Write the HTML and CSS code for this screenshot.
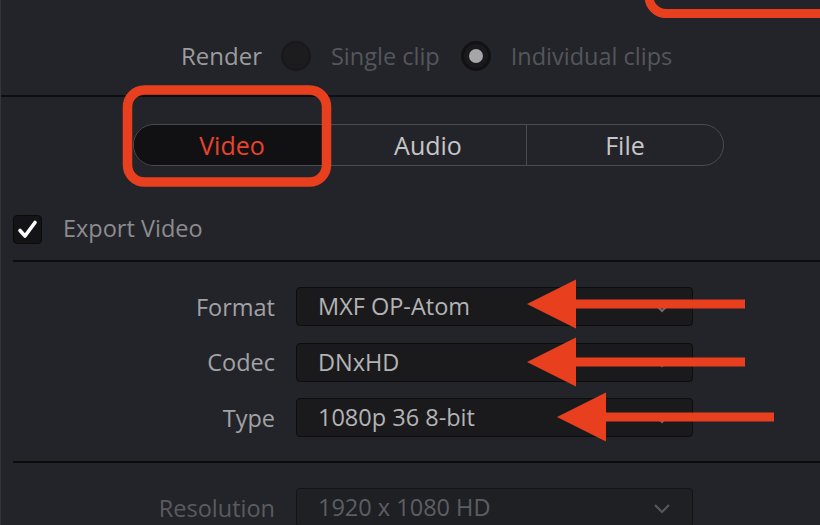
FILE: index.html
```html
<!DOCTYPE html>
<html>
<head>
<meta charset="utf-8">
<link rel="stylesheet" href="styles.css">
</head>
<body>
<div class="page">
  <div class="render-row">
    <span class="render-label">Render</span>
    <span class="radio"></span>
    <span class="radio-text">Single clip</span>
    <span class="radio radio-on"><span class="dot"></span></span>
    <span class="radio-text">Individual clips</span>
  </div>

  <div class="tabs">
    <div class="tab tab-active">Video</div>
    <div class="tab">Audio</div>
    <div class="tab">File</div>
  </div>

  <div class="export-row">
    <span class="checkbox">
      <svg width="29" height="29" viewBox="0 0 29 29"><path d="M7 15.5 L12 21 L22 7.5" fill="none" stroke="#ffffff" stroke-width="3.6" stroke-linecap="round" stroke-linejoin="round"/></svg>
    </span>
    <span class="export-text">Export Video</span>
  </div>

  <div class="sep"></div>

  <div class="form">
    <div class="row">
      <span class="label">Format</span>
      <div class="select"><span class="value">MXF OP-Atom</span><svg class="chev" width="18" height="12" viewBox="0 0 18 12"><path d="M2 2 L9 9 L16 2" fill="none" stroke="#6a6b70" stroke-width="2.2"/></svg></div>
    </div>
    <div class="row">
      <span class="label">Codec</span>
      <div class="select"><span class="value">DNxHD</span><svg class="chev" width="18" height="12" viewBox="0 0 18 12"><path d="M2 2 L9 9 L16 2" fill="none" stroke="#6a6b70" stroke-width="2.2"/></svg></div>
    </div>
    <div class="row">
      <span class="label">Type</span>
      <div class="select"><span class="value">1080p 36 8-bit</span><svg class="chev" width="18" height="12" viewBox="0 0 18 12"><path d="M2 2 L9 9 L16 2" fill="none" stroke="#6a6b70" stroke-width="2.2"/></svg></div>
    </div>
  </div>

  <div class="sep sep2"></div>

  <div class="row dim-row">
    <span class="label dim">Resolution</span>
    <div class="select"><span class="value dim">1920 x 1080 HD</span><svg class="chev" width="18" height="12" viewBox="0 0 18 12"><path d="M2 2 L9 9 L16 2" fill="none" stroke="#55565b" stroke-width="2.2"/></svg></div>
  </div>

  <svg class="overlay" width="820" height="525" viewBox="0 0 820 525">
    <rect x="649" y="-100" width="300" height="113.5" rx="17" fill="none" stroke="#e8401f" stroke-width="9"/>
    <rect x="127.5" y="90" width="199" height="92" rx="17" fill="none" stroke="#e8401f" stroke-width="9.5"/>
    <polygon fill="#e8401f" points="527,304 576,279.5 576,299.5 745,299.5 745,308.5 576,308.5 576,328.5"/>
    <polygon fill="#e8401f" points="527,362 576,337.5 576,357.5 745,357.5 745,366.5 576,366.5 576,386.5"/>
    <polygon fill="#e8401f" points="557,417 606,392.5 606,412.5 774,412.5 774,421.5 606,421.5 606,441.5"/>
  </svg>
</div>
</body>
</html>
```

FILE: styles.css
```css
html, body {
  margin: 0;
  padding: 0;
  background: #232429;
}
body {
  width: 820px;
  height: 525px;
  overflow: hidden;
  font-family: "Open Sans", "Noto Sans", sans-serif;
}
.page {
  position: relative;
  width: 820px;
  height: 525px;
  box-sizing: border-box;
  border-left: 1px solid #34353a;
  overflow: hidden;
}

/* Render row */
.render-row {
  box-sizing: border-box;
  height: 97px;
  padding-top: 41px;
  padding-left: 180px;
  display: flex;
  align-items: flex-start;
  border-bottom: 2px solid #0e0e10;
  font-size: 24px;
  line-height: 30px;
}
.render-label {
  color: #9c9c9e;
  margin-right: 19px;
}
.radio {
  width: 30px;
  height: 30px;
  box-sizing: border-box;
  border-radius: 50%;
  background: #1c1c1f;
  border: 2px solid #19191b;
  display: flex;
  align-items: center;
  justify-content: center;
}
.radio-on {
  background: #1a1a1c;
  border: 3px solid #121214;
}
.dot {
  width: 14px;
  height: 14px;
  border-radius: 50%;
  background: #a6a6aa;
}
.radio-text {
  color: #55565b;
  font-size: 23.5px;
  margin-left: 20px;
  margin-right: 21px;
}

/* Tabs */
.tabs {
  margin-top: 27px;
  margin-left: 132px;
  width: 591px;
  height: 42px;
  box-sizing: border-box;
  border: 1.5px solid #4a4b50;
  border-radius: 21px;
  display: flex;
  overflow: hidden;
}
.tab {
  flex: 1;
  display: flex;
  align-items: center;
  justify-content: center;
  color: #c6c6c8;
  font-size: 25px;
  line-height: 1;
}
.tab + .tab {
  border-left: 1.5px solid #4a4b50;
}
.tab-active {
  background: #111113;
  color: #e8432d;
}
.tab-active + .tab {
  border-left: none;
}

/* Export row */
.export-row {
  margin-top: 49px;
  margin-left: 12px;
  display: flex;
  align-items: center;
  height: 29px;
}
.checkbox {
  width: 29px;
  height: 29px;
  box-sizing: border-box;
  background: #141416;
  border: 1px solid #0a0a0b;
  border-radius: 4px;
  display: flex;
}
.checkbox svg {
  margin: -1px;
}
.export-text {
  margin-left: 21px;
  color: #8c8c8e;
  font-size: 23.5px;
  line-height: 29px;
  margin-top: -3px;
}

.sep {
  margin-top: 16px;
  margin-left: 12px;
  height: 2px;
  background: #0c0c0e;
}
.sep2 {
  margin-top: 24px;
}

/* Form */
.form {
  margin-top: 25px;
  display: flex;
  flex-direction: column;
  gap: 16.5px;
}
.row {
  display: flex;
  align-items: center;
  height: 39px;
}
.label {
  width: 274px;
  text-align: right;
  color: #a2a2a4;
  font-size: 23.5px;
  line-height: 39px;
  margin-top: 1px;
}
.select {
  margin-left: 21px;
  width: 397px;
  height: 39px;
  box-sizing: border-box;
  background: #1a1a1c;
  border: 1.5px solid #0d0d0e;
  border-radius: 4px;
  display: flex;
  align-items: center;
  padding-left: 21px;
  padding-right: 21px;
}
.value {
  flex: 1;
  color: #b3b3b5;
  font-size: 23.5px;
  line-height: 1;
  margin-top: 1px;
}
.chev {
  flex: none;
  margin-top: 2px;
}
.dim-row {
  margin-top: 25px;
}
.dim-row .select {
  background: #1f2023;
  border-color: #141416;
}
.label.dim {
  color: #5a5b60;
}
.value.dim {
  color: #5d5e63;
}

.overlay {
  position: absolute;
  left: -1px;
  top: 0;
}
```
